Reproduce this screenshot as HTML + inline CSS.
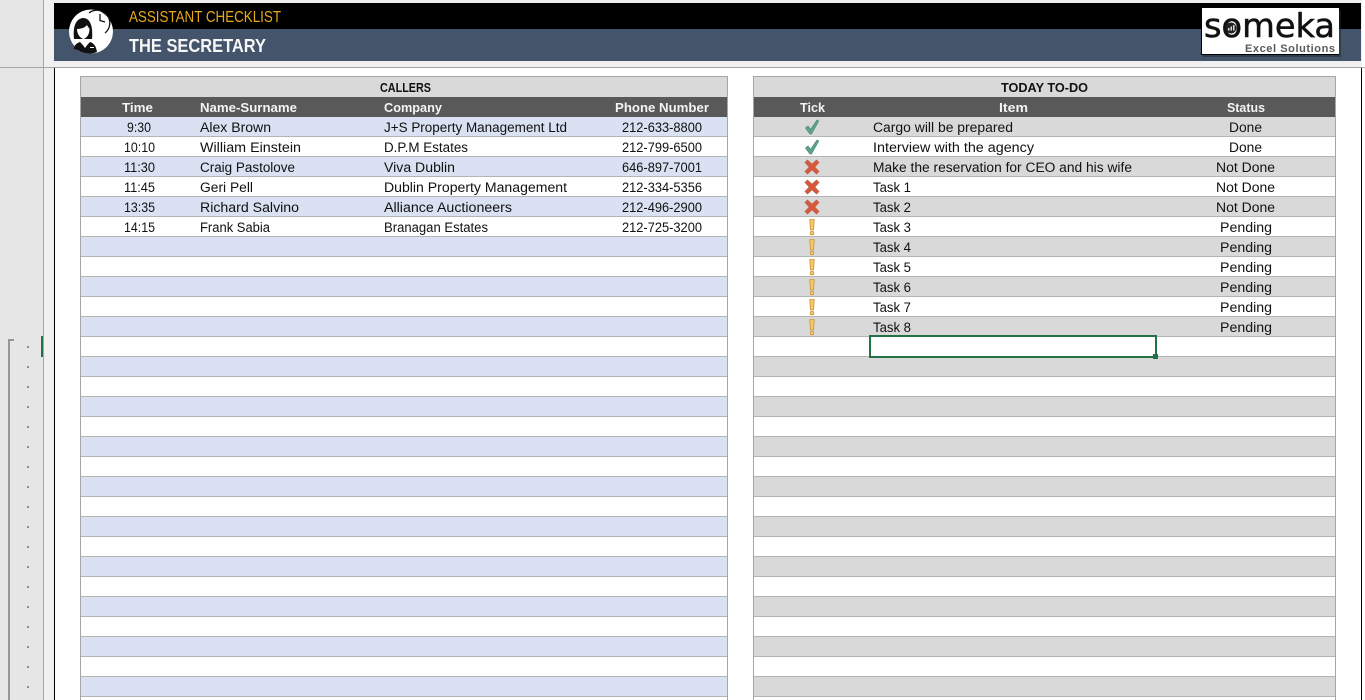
<!DOCTYPE html>
<html><head><meta charset="utf-8"><title>Assistant Checklist</title>
<style>
html,body{margin:0;padding:0;width:1365px;height:700px;overflow:hidden;background:#fff}
svg{display:block}
text{font-family:"Liberation Sans",sans-serif;font-size:13.5px;fill:#111}
.b{font-weight:bold;font-size:13px}
.w{fill:#f4f4f4;font-weight:bold;font-size:13px}
rect{shape-rendering:crispEdges}
</style></head><body>
<svg width="1365" height="700" viewBox="0 0 1365 700" xmlns="http://www.w3.org/2000/svg">
<defs>
<pattern id="pb" x="0" y="117" width="10" height="40" patternUnits="userSpaceOnUse">
<rect width="10" height="19" fill="#d9e1f2"/><rect y="19" width="10" height="1" fill="#b4b4b4"/><rect y="20" width="10" height="19" fill="#fff"/><rect y="39" width="10" height="1" fill="#b4b4b4"/>
</pattern>
<pattern id="pg" x="0" y="117" width="10" height="40" patternUnits="userSpaceOnUse">
<rect width="10" height="19" fill="#d9d9d9"/><rect y="19" width="10" height="1" fill="#b4b4b4"/><rect y="20" width="10" height="19" fill="#fff"/><rect y="39" width="10" height="1" fill="#b4b4b4"/>
</pattern>
<pattern id="dots" x="23" y="346" width="10" height="20" patternUnits="userSpaceOnUse">
<rect x="4" y="0" width="2" height="2" fill="#8e8e8e"/>
</pattern>
<g id="chk"><path d="M-6.500 1 L-4 -1 L-1.500 2.500 L5 -7 L6.800 -6 L-0.500 7 L-2 7 Z" fill="#5fa58a" stroke="#4b8a73" stroke-width="0.7" stroke-linejoin="round"/></g>
<g id="x"><path d="M-7 -4.500 L-4.500 -7 L0 -2.800 L4.500 -7 L7 -4.500 L2.800 0 L7 4.500 L4.500 7 L0 2.800 L-4.500 7 L-7 4.500 L-2.800 0 Z" fill="#d9573a" stroke="#b9674f" stroke-width="0.8" stroke-linejoin="round"/></g>
<g id="ex"><path d="M-2.200 -7.500 L2.200 -7.500 L1.600 3 L-1.600 3 Z" fill="#f6c966" stroke="#c9923a" stroke-width="0.8" stroke-linejoin="round"/><rect x="-1.700" y="4.500" width="3.400" height="3.200" rx="1" fill="#f6c966" stroke="#c9923a" stroke-width="0.8" style="shape-rendering:auto"/></g>
</defs>

<!-- chrome -->
<rect x="0" y="0" width="1365" height="700" fill="#fff"/>
<rect x="0" y="0" width="43" height="700" fill="#e6e6e6"/>
<rect x="44" y="0" width="1321" height="67" fill="#f0f0f0"/>
<rect x="44" y="68" width="10" height="632" fill="#f0f0f0"/>
<rect x="43" y="0" width="1" height="700" fill="#a6a6a6"/>
<rect x="0" y="67" width="1365" height="1" fill="#a6a6a6"/>
<rect x="54" y="68" width="1" height="632" fill="#000"/>
<rect x="1361" y="68" width="1" height="632" fill="#000"/>
<rect x="1362" y="0" width="3" height="67" fill="#fff"/>

<!-- outline gutter -->
<rect x="8" y="339" width="2" height="361" fill="#969696"/>
<rect x="8" y="339" width="6" height="2" fill="#969696"/>
<rect x="26" y="346" width="4" height="354" fill="url(#dots)"/>
<rect x="41" y="336" width="2" height="21" fill="#217346"/>

<!-- banner -->
<rect x="54" y="3" width="1307" height="26" fill="#000"/>
<rect x="54" y="29" width="1307" height="32" fill="#44546a"/>
<text x="129" y="22" textLength="152" lengthAdjust="spacingAndGlyphs" style="font-size:16px;fill:#e8a91c">ASSISTANT CHECKLIST</text>
<text x="129" y="52" textLength="137" lengthAdjust="spacingAndGlyphs" class="b" style="font-size:18.5px;fill:#f7f7f7">THE SECRETARY</text>

<!-- secretary icon -->
<circle cx="91" cy="31.500" r="22" fill="#fff"/>
<path d="M89 13 A11.500 11.500 0 1 1 105 33" fill="none" stroke="#111" stroke-width="1.300"/>
<path d="M100 14 L100 20.500 L105 22" fill="none" stroke="#111" stroke-width="1.300"/>
<path d="M74 39 C73 30 74 19 83 18 C91 18 93 28 92 39 Z" fill="#111"/>
<path d="M77 29 C80 29 85 28 87 25 C88 27 89 28 89.500 29 C89.500 34 87 38 83.500 39 C80 38 77 34 77 29 Z" fill="#fff"/>
<path d="M74 49 C74 45 77 43 80 42 L85 47 L90 42 C93 43 96 45 97 52 A22 22 0 0 1 91 53.500 A22 22 0 0 1 78 50 Z" fill="#111"/>
<path d="M81 42.500 L85 48 L89 42.500 L85 44.500 Z" fill="#fff"/>
<rect x="90" y="47" width="4" height="1" fill="#fff"/>

<!-- logo -->
<rect x="1203" y="10" width="138" height="47" fill="#20262e" opacity="0.5"/>
<rect x="1201" y="8" width="138" height="47" fill="#fff"/>
<rect x="1201" y="8" width="1" height="47" fill="#000"/>
<rect x="1201" y="54" width="138" height="1" fill="#000"/>
<text x="1204" y="37" textLength="131" lengthAdjust="spacingAndGlyphs" style="font-family:'DejaVu Sans',sans-serif;font-size:33px;fill:#111;stroke:#111;stroke-width:0.500">someka</text>
<circle cx="1231" cy="28" r="5.500" fill="#222"/>
<rect x="1228" y="28" width="1.500" height="2.500" fill="#ddd"/><rect x="1230.500" y="26.500" width="1.500" height="4" fill="#ddd"/><rect x="1233" y="25" width="1.500" height="5.500" fill="#ddd"/>
<text x="1245" y="52" textLength="90" lengthAdjust="spacing" class="b" style="font-size:11px;fill:#595959">Excel Solutions</text>

<!-- callers table -->
<rect x="80" y="76" width="648" height="21" fill="#d9d9d9"/>
<rect x="80" y="76" width="648" height="1" fill="#a6a6a6"/>
<rect x="80" y="97" width="648" height="20" fill="#595959"/>
<rect x="80" y="117" width="648" height="583" fill="url(#pb)"/>
<rect x="80" y="76" width="1" height="624" fill="#a6a6a6"/>
<rect x="727" y="76" width="1" height="624" fill="#a6a6a6"/>

<!-- todo table -->
<rect x="753" y="76" width="583" height="21" fill="#d9d9d9"/>
<rect x="753" y="76" width="583" height="1" fill="#a6a6a6"/>
<rect x="753" y="97" width="583" height="20" fill="#595959"/>
<rect x="753" y="117" width="583" height="583" fill="url(#pg)"/>
<rect x="753" y="76" width="1" height="624" fill="#a6a6a6"/>
<rect x="1335" y="76" width="1" height="624" fill="#a6a6a6"/>

<!-- callers text -->
<text x="380" y="92" textLength="51" lengthAdjust="spacingAndGlyphs" class="b">CALLERS</text>
<text x="122" y="112" textLength="31" lengthAdjust="spacingAndGlyphs" class="w">Time</text>
<text x="200" y="112" textLength="97" lengthAdjust="spacingAndGlyphs" class="w">Name-Surname</text>
<text x="384" y="112" textLength="58" lengthAdjust="spacingAndGlyphs" class="w">Company</text>
<text x="615" y="112" textLength="94" lengthAdjust="spacingAndGlyphs" class="w">Phone Number</text>

<text x="127" y="132" textLength="24" lengthAdjust="spacingAndGlyphs">9:30</text>
<text x="124" y="152" textLength="31" lengthAdjust="spacingAndGlyphs">10:10</text>
<text x="124" y="172" textLength="31" lengthAdjust="spacingAndGlyphs">11:30</text>
<text x="124" y="192" textLength="31" lengthAdjust="spacingAndGlyphs">11:45</text>
<text x="124" y="212" textLength="31" lengthAdjust="spacingAndGlyphs">13:35</text>
<text x="124" y="232" textLength="31" lengthAdjust="spacingAndGlyphs">14:15</text>

<text x="200" y="132" textLength="71" lengthAdjust="spacingAndGlyphs">Alex Brown</text>
<text x="200" y="152" textLength="101" lengthAdjust="spacingAndGlyphs">William Einstein</text>
<text x="200" y="172" textLength="95" lengthAdjust="spacingAndGlyphs">Craig Pastolove</text>
<text x="200" y="192" textLength="53" lengthAdjust="spacingAndGlyphs">Geri Pell</text>
<text x="200" y="212" textLength="99" lengthAdjust="spacingAndGlyphs">Richard Salvino</text>
<text x="200" y="232" textLength="70" lengthAdjust="spacingAndGlyphs">Frank Sabia</text>

<text x="384" y="132" textLength="183" lengthAdjust="spacingAndGlyphs">J+S Property Management Ltd</text>
<text x="384" y="152" textLength="84" lengthAdjust="spacingAndGlyphs">D.P.M Estates</text>
<text x="384" y="172" textLength="71" lengthAdjust="spacingAndGlyphs">Viva Dublin</text>
<text x="384" y="192" textLength="183" lengthAdjust="spacingAndGlyphs">Dublin Property Management</text>
<text x="384" y="212" textLength="128" lengthAdjust="spacingAndGlyphs">Alliance Auctioneers</text>
<text x="384" y="232" textLength="104" lengthAdjust="spacingAndGlyphs">Branagan Estates</text>

<text x="622" y="132" textLength="80" lengthAdjust="spacingAndGlyphs">212-633-8800</text>
<text x="622" y="152" textLength="80" lengthAdjust="spacingAndGlyphs">212-799-6500</text>
<text x="622" y="172" textLength="80" lengthAdjust="spacingAndGlyphs">646-897-7001</text>
<text x="622" y="192" textLength="80" lengthAdjust="spacingAndGlyphs">212-334-5356</text>
<text x="622" y="212" textLength="80" lengthAdjust="spacingAndGlyphs">212-496-2900</text>
<text x="622" y="232" textLength="80" lengthAdjust="spacingAndGlyphs">212-725-3200</text>

<!-- todo text -->
<text x="1001" y="92" textLength="87" lengthAdjust="spacingAndGlyphs" class="b">TODAY TO-DO</text>
<text x="800" y="112" textLength="25" lengthAdjust="spacingAndGlyphs" class="w">Tick</text>
<text x="999" y="112" textLength="29" lengthAdjust="spacingAndGlyphs" class="w">Item</text>
<text x="1227" y="112" textLength="38" lengthAdjust="spacingAndGlyphs" class="w">Status</text>

<text x="873" y="132" textLength="140" lengthAdjust="spacingAndGlyphs">Cargo will be prepared</text>
<text x="873" y="152" textLength="161" lengthAdjust="spacingAndGlyphs">Interview with the agency</text>
<text x="873" y="172" textLength="259" lengthAdjust="spacingAndGlyphs">Make the reservation for CEO and his wife</text>
<text x="873" y="192" textLength="38" lengthAdjust="spacingAndGlyphs">Task 1</text>
<text x="873" y="212" textLength="38" lengthAdjust="spacingAndGlyphs">Task 2</text>
<text x="873" y="232" textLength="38" lengthAdjust="spacingAndGlyphs">Task 3</text>
<text x="873" y="252" textLength="38" lengthAdjust="spacingAndGlyphs">Task 4</text>
<text x="873" y="272" textLength="38" lengthAdjust="spacingAndGlyphs">Task 5</text>
<text x="873" y="292" textLength="38" lengthAdjust="spacingAndGlyphs">Task 6</text>
<text x="873" y="312" textLength="38" lengthAdjust="spacingAndGlyphs">Task 7</text>
<text x="873" y="332" textLength="38" lengthAdjust="spacingAndGlyphs">Task 8</text>

<text x="1229" y="132" textLength="33" lengthAdjust="spacingAndGlyphs">Done</text>
<text x="1229" y="152" textLength="33" lengthAdjust="spacingAndGlyphs">Done</text>
<text x="1216" y="172" textLength="59" lengthAdjust="spacingAndGlyphs">Not Done</text>
<text x="1216" y="192" textLength="59" lengthAdjust="spacingAndGlyphs">Not Done</text>
<text x="1216" y="212" textLength="59" lengthAdjust="spacingAndGlyphs">Not Done</text>
<text x="1220" y="232" textLength="52" lengthAdjust="spacingAndGlyphs">Pending</text>
<text x="1220" y="252" textLength="52" lengthAdjust="spacingAndGlyphs">Pending</text>
<text x="1220" y="272" textLength="52" lengthAdjust="spacingAndGlyphs">Pending</text>
<text x="1220" y="292" textLength="52" lengthAdjust="spacingAndGlyphs">Pending</text>
<text x="1220" y="312" textLength="52" lengthAdjust="spacingAndGlyphs">Pending</text>
<text x="1220" y="332" textLength="52" lengthAdjust="spacingAndGlyphs">Pending</text>

<!-- tick icons -->
<use href="#chk" x="812" y="127"/>
<use href="#chk" x="812" y="147"/>
<use href="#x" x="812" y="167"/>
<use href="#x" x="812" y="187"/>
<use href="#x" x="812" y="207"/>
<use href="#ex" x="812" y="227"/>
<use href="#ex" x="812" y="247"/>
<use href="#ex" x="812" y="267"/>
<use href="#ex" x="812" y="287"/>
<use href="#ex" x="812" y="307"/>
<use href="#ex" x="812" y="327"/>

<!-- selected cell -->
<rect x="870" y="336" width="286" height="21" fill="none" stroke="#217346" stroke-width="2"/>
<rect x="1153" y="354" width="5" height="5" fill="#217346"/>
</svg>
</body></html>
